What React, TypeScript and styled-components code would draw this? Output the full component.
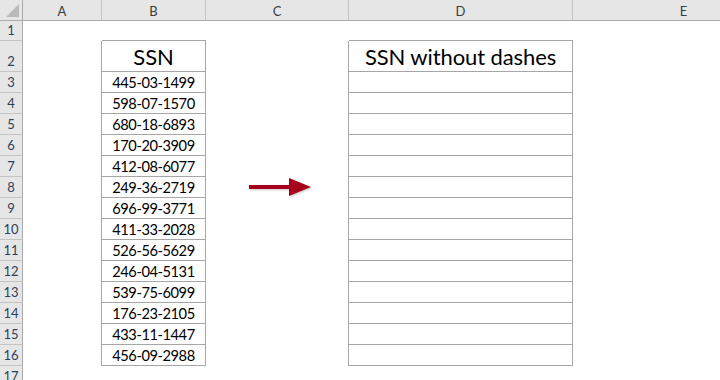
import React from "react";
import styled, { createGlobalStyle, css } from "styled-components";

const GlobalStyle = createGlobalStyle`
  html, body {
    margin: 0;
    padding: 0;
    background: #ffffff;
    overflow: hidden;
  }
  * { box-sizing: border-box; }
`;

const HEAD_BG = "#e6e6e6";
const HEAD_EDGE = "#ababab";
const HEAD_SEP = "#c4c4c4";
const CELL_EDGE = "#a6a6a6";

const Viewport = styled.div`
  width: 720px;
  height: 380px;
  overflow: hidden;
  background: #ffffff;
`;

const Sheet = styled.div`
  display: grid;
  grid-template-columns: 23px 79px 104px 143px 224px 222px;
  grid-template-rows: 21px 20px 31px repeat(15, 21px);
  font-family: Lato, "Liberation Sans", sans-serif;
`;

const Corner = styled.div`
  background: ${HEAD_BG};
  border-right: 1px solid ${HEAD_EDGE};
  border-bottom: 1px solid ${HEAD_EDGE};
  display: flex;
  align-items: flex-end;
  justify-content: flex-end;
  padding: 0 3px 3px 0;
`;

const CornerMark = styled.div`
  width: 13px;
  height: 13px;
  background: #b9b9b9;
  clip-path: polygon(100% 0, 100% 100%, 0 100%);
`;

const ColHead = styled.div`
  background: ${HEAD_BG};
  border-right: 1px solid ${HEAD_SEP};
  border-bottom: 1px solid ${HEAD_EDGE};
  display: flex;
  align-items: center;
  justify-content: center;
  font-size: 13px;
  color: #3c3c3c;
  padding-top: 1px;
`;

const RowHead = styled.div`
  background: ${HEAD_BG};
  border-right: 1px solid ${HEAD_EDGE};
  border-bottom: 1px solid ${HEAD_SEP};
  display: flex;
  align-items: flex-end;
  justify-content: center;
  font-size: 13px;
  color: #2f3f5a;
  padding-bottom: 2px;
`;

const Cell = styled.div<{ $right?: boolean; $bottom?: boolean; $title?: boolean }>`
  display: flex;
  align-items: flex-end;
  justify-content: center;
  color: #000000;
  white-space: nowrap;
  overflow: visible;
  ${(p) => p.$right && css`border-right: 1px solid ${CELL_EDGE};`}
  ${(p) => p.$bottom && css`border-bottom: 1px solid ${CELL_EDGE};`}
  ${(p) =>
    p.$title
      ? css`
          font-size: 22px;
          letter-spacing: -0.1px;
          padding-bottom: 1px;
        `
      : css`
          font-size: 14.67px;
          letter-spacing: -0.45px;
          padding-bottom: 1px;
        `}
`;

const ArrowCell = styled(Cell)`
  align-items: center;
  justify-content: flex-start;
`;

const ArrowMark = styled.svg`
  margin-left: 43px;
  filter: drop-shadow(1px 1px 1px rgba(0, 0, 0, 0.22));
`;

const RightArrow = () => (
  <ArrowMark width="62" height="18" viewBox="0 0 62 18">
    <rect x="0" y="7" width="41" height="4" fill="#a6001d" />
    <polygon points="40,0 62,9 40,18" fill="#a6001d" />
  </ArrowMark>
);

const COLUMNS = ["A", "B", "C", "D", "E"];

const SSNS = [
  "445-03-1499",
  "598-07-1570",
  "680-18-6893",
  "170-20-3909",
  "412-08-6077",
  "249-36-2719",
  "696-99-3771",
  "411-33-2028",
  "526-56-5629",
  "246-04-5131",
  "539-75-6099",
  "176-23-2105",
  "433-11-1447",
  "456-09-2988",
];

const FIRST = 2;
const LAST = 16;
const ARROW_ROW = 8;

function renderCell(row: number, col: string) {
  const key = `${col}${row}`;
  const inTable = row >= FIRST && row <= LAST;
  const boxed = col === "B" || col === "D";

  if (col === "C" && row === ARROW_ROW) {
    return (
      <ArrowCell key={key} $right>
        <RightArrow />
      </ArrowCell>
    );
  }

  if (boxed && row === FIRST - 1) {
    return <Cell key={key} $bottom />;
  }

  if (boxed && inTable) {
    let text = "";
    if (row === FIRST) text = col === "B" ? "SSN" : "SSN without dashes";
    else if (col === "B") text = SSNS[row - FIRST - 1];
    return (
      <Cell key={key} $right $bottom $title={row === FIRST}>
        {text}
      </Cell>
    );
  }

  if ((col === "A" || col === "C") && inTable) {
    return <Cell key={key} $right />;
  }

  return <Cell key={key} />;
}

export default function App() {
  const rows = Array.from({ length: 17 }, (_, i) => i + 1);
  return (
    <>
      <GlobalStyle />
      <Viewport>
        <Sheet>
          <Corner>
            <CornerMark />
          </Corner>
          {COLUMNS.map((c) => (
            <ColHead key={c}>{c}</ColHead>
          ))}
          {rows.map((r) => (
            <React.Fragment key={r}>
              <RowHead>{r}</RowHead>
              {COLUMNS.map((c) => renderCell(r, c))}
            </React.Fragment>
          ))}
        </Sheet>
      </Viewport>
    </>
  );
}
